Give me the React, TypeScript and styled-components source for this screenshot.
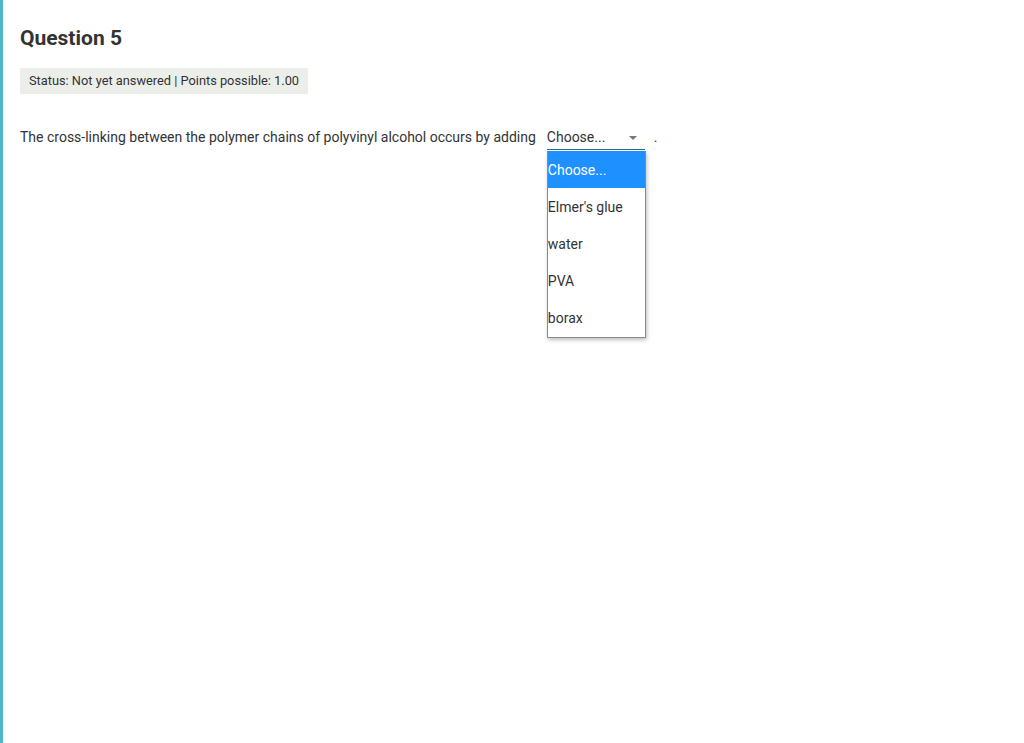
import React, {useState} from "react";
import styled, {createGlobalStyle} from "styled-components";

const GlobalStyle = createGlobalStyle`
  html, body {
    margin: 0;
    padding: 0;
    background: #fff;
    font-family: Roboto, "Liberation Sans", sans-serif;
    color: #333;
  }
`;

const Page = styled.div`
  min-height: 743px;
  border-left: 3px solid #4fb8c7;
  padding: 25px 17px 0;
  box-sizing: border-box;
`;

const Title = styled.h2`
  margin: 0 0 17px;
  font-size: 21px;
  font-weight: 700;
  line-height: 26px;
  color: #333;
`;

const Status = styled.div`
  display: inline-block;
  background: #eceee9;
  font-size: 12.8px;
  line-height: 26px;
  padding: 0 9px;
  color: #333;
`;

const Prompt = styled.div`
  margin-top: 33px;
  font-size: 14px;
  line-height: 20px;
  display: flex;
  align-items: flex-start;
`;

const SelectWrap = styled.div`
  position: relative;
  margin-left: 11px;
  width: 98px;
`;

const SelectBox = styled.div`
  display: flex;
  align-items: center;
  justify-content: space-between;
  height: 20px;
  padding-bottom: 2px;
  border-bottom: 1px solid #2b6f7b;
  cursor: pointer;
`;

const Caret = styled.span`
  width: 0;
  height: 0;
  margin-right: 8px;
  margin-top: 2px;
  border-left: 4px solid transparent;
  border-right: 4px solid transparent;
  border-top: 4px solid #777;
`;

const Options = styled.ul`
  position: absolute;
  top: 24px;
  left: 0;
  width: 97px;
  margin: 0;
  padding: 0 0 1px;
  list-style: none;
  background: #fff;
  border: 1px solid #8a8a8a;
  border-top: none;
  box-shadow: 1px 2px 4px rgba(0, 0, 0, 0.25);
`;

const Option = styled.li<{ $active: boolean }>`
  height: 37px;
  line-height: 38px;
  font-size: 14px;
  background: ${p => (p.$active ? "#1e90ff" : "#fff")};
  color: ${p => (p.$active ? "#fff" : "#333")};
`;

const Dot = styled.span`
  margin-left: 9px;
`;

const choices = ["Choose...", "Elmer's glue", "water", "PVA", "borax"];

const App: React.FC = () => {
  const [active, setActive] = useState<number>(0);

  return (
    <>
      <GlobalStyle />
      <Page>
        <Title>Question 5</Title>
        <Status>Status: Not yet answered | Points possible: 1.00</Status>
        <Prompt>
          The cross-linking between the polymer chains of polyvinyl alcohol occurs by adding
          <SelectWrap>
            <SelectBox>
              <span>Choose...</span>
              <Caret />
            </SelectBox>
            <Options>
              {choices.map((c, i) => (
                <Option key={c} $active={i === active} onMouseEnter={() => setActive(i)}>
                  {c}
                </Option>
              ))}
            </Options>
          </SelectWrap>
          <Dot>.</Dot>
        </Prompt>
      </Page>
    </>
  );
};

export default App;
